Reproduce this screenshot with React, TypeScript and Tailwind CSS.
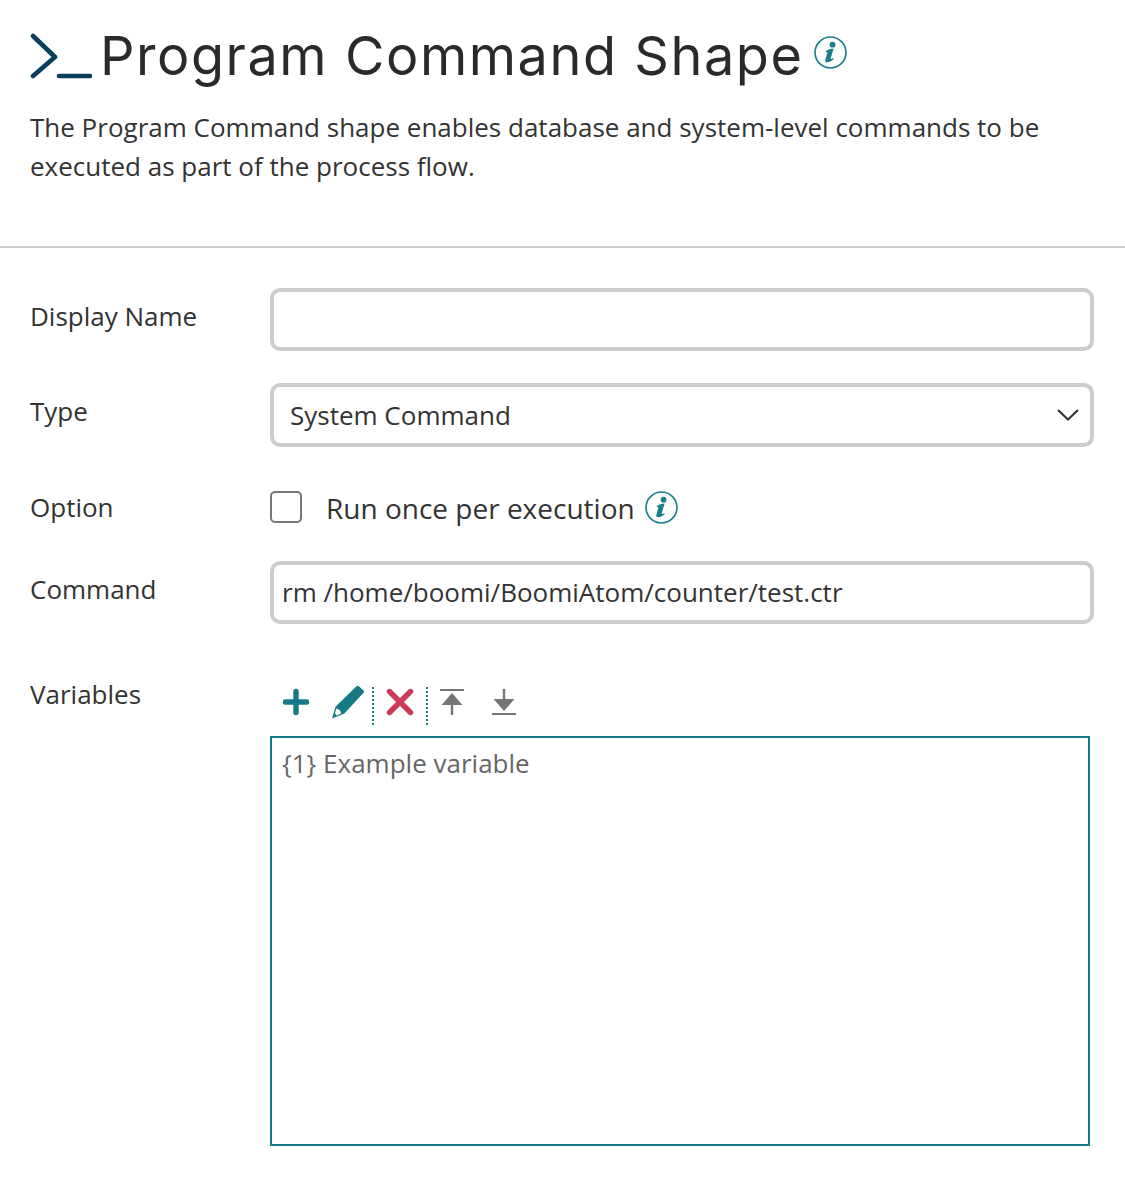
import React from "react"

function InfoIcon({ className }: { className?: string }) {
    return (
        <svg viewBox="0 0 32 32" className={className} fill="none">
            <circle cx="16" cy="16" r="15" stroke="#1a7f8a" strokeWidth="1.6" />
            <circle cx="18" cy="8.4" r="2.8" fill="#1a7f8a" />
            <path d="M11.400 14.800c2.200-1.800 5-2.600 7.600-2.600l-2.800 9.400c-.3 1 .5 1.100 2.400-.3l.7 1c-2.400 2.300-4.800 3.200-6.400 3.200-1.800 0-2.300-1.100-1.900-2.500l2-7c.1-.6-.6-.7-1.200-.3z" fill="#1a7f8a" />
        </svg>
    )
}

function Toolbar() {
    return (
        <div className="flex h-[42px] items-center">
            {/* add */}
            <svg viewBox="0 0 28 28" className="ml-[12px] size-[28px]">
                <path d="M14 3.5v21M3.5 14h21" stroke="#157a86" strokeWidth="5.4" strokeLinecap="round" />
            </svg>
            {/* edit */}
            <svg viewBox="0 0 34 34" className="ml-[21px] size-[34px]">
                <path d="M25.500 1.200c.8-.7 1.700-.7 2.400 0l4.600 4.200c.7.7.7 1.600 0 2.400L13.400 28.600 1 33.400l3.500-11.600z" fill="#157a86" />
                <path d="M5.200 23.400c2.400.3 4.400 2.200 5 4.800l-4.200 2.200-2-2z" fill="#fff" />
            </svg>
            <div className="ml-[7px] mt-[8px] h-[38px] border-l-2 border-dotted border-[#157a86]" />
            {/* remove */}
            <svg viewBox="0 0 28 28" className="ml-[12px] size-[28px]">
                <path d="M3.500 3.500l21 21M24.500 3.500l-21 21" stroke="#c93b58" strokeWidth="5.400" strokeLinecap="round" />
            </svg>
            <div className="ml-[12px] mt-[8px] h-[38px] border-l-2 border-dotted border-[#157a86]" />
            {/* move up */}
            <svg viewBox="0 0 26 28" className="ml-[11px] h-[28px] w-[26px]" fill="#757575">
                <rect x="1" y="1" width="24" height="2" />
                <path d="M13 5l10.500 12H14.200v10h-2.400V17H2.500z" />
            </svg>
            {/* move down */}
            <svg viewBox="0 0 26 28" className="ml-[26px] h-[28px] w-[26px]" fill="#757575">
                <rect x="1" y="25" width="24" height="2" />
                <path d="M13 23L2.500 11h9.300V1h2.400v10h9.300z" />
            </svg>
        </div>
    )
}

export default function App() {
    const labelClass = "w-[240px] shrink-0 text-[26px] text-[#333]"
    const fieldClass = "h-[63px] w-[824px] rounded-[10px] border-4 border-[#ccc] bg-white flex items-center text-[26px] text-[#333]"

    return (
        <div className="min-h-[1190px] bg-white font-['Open_Sans',sans-serif]">
            {/* Header */}
            <div className="h-[248px] border-b-2 border-[#ccc] pl-[30px] pt-[24px]">
                <div className="flex h-[64px] items-center">
                    <svg viewBox="0 0 62 46" className="h-[46px] w-[62px] shrink-0" fill="none">
                        <path d="M3 3l22 21L3 43" stroke="#083f5c" strokeWidth="4.6" strokeLinecap="round" strokeLinejoin="round" />
                        <path d="M29 43h31" stroke="#083f5c" strokeWidth="4.6" strokeLinecap="round" />
                    </svg>
                    <h1 className="ml-[8px] whitespace-nowrap font-['Inter',sans-serif] text-[54px] font-normal leading-none tracking-[1.55px] text-[#2a2a2a]">
                        Program Command Shape
                    </h1>
                    <InfoIcon className="mb-[8px] ml-[11px] size-[33px]" />
                </div>
                <p className="mt-[20px] text-[26px] leading-[39px] text-[#333]">
                    The Program Command shape enables database and system-level commands to be
                    <br />
                    executed as part of the process flow.
                </p>
            </div>

            {/* Form */}
            <div className="pl-[30px] pt-[40px]">
                <div className="flex items-center">
                    <div className={labelClass + " mb-[6px]"}>Display Name</div>
                    <div className={fieldClass} />
                </div>

                <div className="mt-[32px] flex items-center">
                    <div className={labelClass + " mb-[8px]"}>Type</div>
                    <div className={fieldClass + " h-[64px] justify-between pl-[16px] pr-[10px]"}>
                        <span>System Command</span>
                        <svg viewBox="0 0 24 14" className="h-[14px] w-[24px]" fill="none">
                            <path d="M2 2l10 9.500L22 2" stroke="#333" strokeWidth="2.200" />
                        </svg>
                    </div>
                </div>

                <div className="mt-[44px] flex h-[32px] items-center">
                    <div className={labelClass}>Option</div>
                    <div className="size-[32px] rounded-[5px] border-2 border-[#767676] bg-white" />
                    <span className="ml-[24px] mt-[2px] text-[28px] text-[#333]">Run once per execution</span>
                    <InfoIcon className="ml-[10px] size-[33px]" />
                </div>

                <div className="mt-[38px] flex items-center">
                    <div className={labelClass + " mb-[6px]"}>Command</div>
                    <div className={fieldClass + " pl-[8px]"}>rm /home/boomi/BoomiAtom/counter/test.ctr</div>
                </div>

                <div className="mt-[59px] flex items-start">
                    <div className={labelClass + " -mt-[8px]"}>Variables</div>
                    <div className="-mt-[2px]">
                        <Toolbar />
                        <div className="mt-[13px] h-[410px] w-[820px] border-2 border-[#157a86] px-[10px] pt-[6px] text-[26px] text-[#666]">
                            {"{1} Example variable"}
                        </div>
                    </div>
                </div>
            </div>
        </div>
    )
}
